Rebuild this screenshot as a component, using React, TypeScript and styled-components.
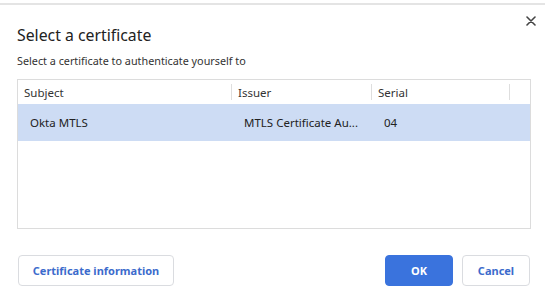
import React from "react";
import styled, { createGlobalStyle } from "styled-components";

const Global = createGlobalStyle`
  html, body { margin: 0; padding: 0; background: #fff; }
  body { font-family: "Noto Sans", "Open Sans", sans-serif; color: #333; }
`;

const Dialog = styled.div`
  width: 547px;
  height: 298px;
  box-sizing: border-box;
  padding-top: 3px;
  display: flex;
  flex-direction: column;
`;

const TopRule = styled.div`
  height: 2px;
  margin-right: 2px;
  background: #e4e4e4;
`;

const Header = styled.div`
  display: flex;
  justify-content: space-between;
  align-items: flex-start;
  padding: 0 7px 0 17px;
`;

const Title = styled.h1`
  margin: 20px 0 0;
  font-size: 15.8px;
  font-weight: 400;
  line-height: 20px;
  color: #222;
`;

const Close = styled.button`
  border: none;
  background: none;
  padding: 0;
  margin-top: 7px;
  width: 18px;
  height: 18px;
  display: flex;
  align-items: center;
  justify-content: center;
  color: #444;
`;

const Subtitle = styled.p`
  margin: 8px 0 0 17px;
  font-size: 10.8px;
  line-height: 16px;
  color: #333;
`;

const Table = styled.div`
  margin: 10px 16px 0 17px;
  height: 150px;
  box-sizing: border-box;
  border: 1px solid #dcdcdc;
  display: flex;
  flex-direction: column;
`;

const Cols = "214px 140px 138px 1fr";

const HeadRow = styled.div`
  display: grid;
  grid-template-columns: ${Cols};
  height: 24px;
  align-items: center;
`;

const HeadCell = styled.div<{ $divider?: boolean }>`
  font-size: 11.5px;
  padding-left: 6px;
  display: flex;
  align-items: center;
  border-right: ${(p) => (p.$divider ? "1px solid #dedede" : "none")};
  box-sizing: border-box;
  height: 16px;
  color: #333;
`;

const BodyRow = styled.div<{ $selected?: boolean }>`
  display: grid;
  grid-template-columns: ${Cols};
  height: 37px;
  align-items: center;
  background: ${(p) => (p.$selected ? "#cddcf4" : "transparent")};
`;

const Cell = styled.div`
  font-size: 11.5px;
  padding-left: 12px;
  white-space: nowrap;
  color: #222;
`;

const Footer = styled.div`
  display: flex;
  align-items: center;
  padding: 26px 17px 0 18px;
  gap: 9px;
`;

const Spacer = styled.div`
  flex: 1;
`;

const Button = styled.button<{ $primary?: boolean; $w: number }>`
  width: ${(p) => p.$w}px;
  height: 31px;
  box-sizing: border-box;
  border-radius: 4px;
  font-family: inherit;
  font-size: 11px;
  font-weight: 700;
  border: 1px solid ${(p) => (p.$primary ? "#3a73dd" : "#dadce0")};
  background: ${(p) => (p.$primary ? "#3a73dd" : "#fff")};
  color: ${(p) => (p.$primary ? "#fff" : "#3c6bcc")};
  padding: 0;
`;

export default function App() {
  return (
    <>
      <Global />
      <Dialog>
        <TopRule />
        <Header>
          <Title>Select a certificate</Title>
          <Close aria-label="Close">
            <svg width="10" height="10" viewBox="0 0 10 10">
              <path d="M1 1L9 9M9 1L1 9" stroke="#444" strokeWidth="1.6" strokeLinecap="round" />
            </svg>
          </Close>
        </Header>
        <Subtitle>Select a certificate to authenticate yourself to</Subtitle>
        <Table>
          <HeadRow>
            <HeadCell $divider>Subject</HeadCell>
            <HeadCell $divider>Issuer</HeadCell>
            <HeadCell $divider>Serial</HeadCell>
            <HeadCell />
          </HeadRow>
          <BodyRow $selected>
            <Cell>Okta MTLS</Cell>
            <Cell>MTLS Certificate Au...</Cell>
            <Cell>04</Cell>
            <Cell />
          </BodyRow>
        </Table>
        <Footer>
          <Button $w={156}>Certificate information</Button>
          <Spacer />
          <Button $primary $w={68}>OK</Button>
          <Button $w={68}>Cancel</Button>
        </Footer>
      </Dialog>
    </>
  );
}
